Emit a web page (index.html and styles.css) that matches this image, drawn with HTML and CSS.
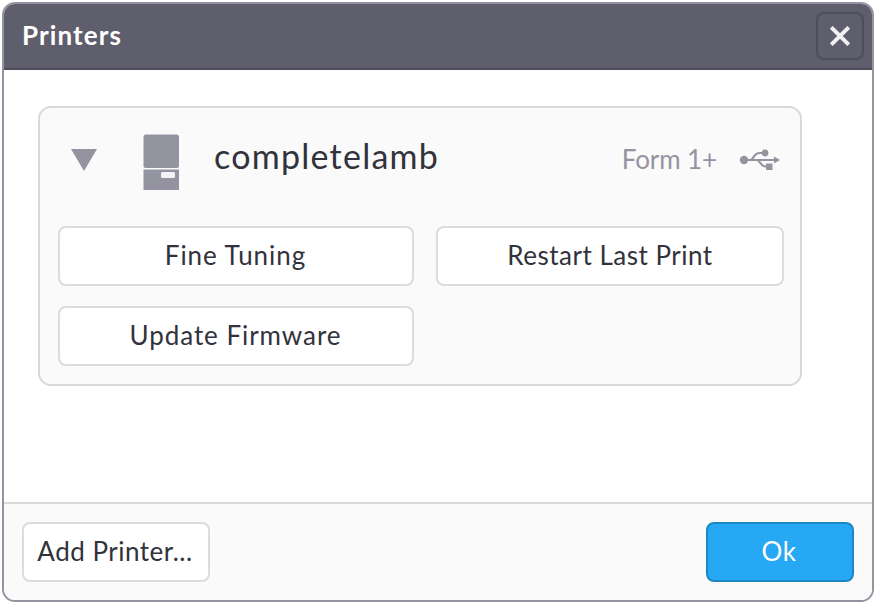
FILE: index.html
```html
<!DOCTYPE html>
<html lang="en">
<head>
  <meta charset="UTF-8" />
  <meta name="viewport" content="width=device-width, initial-scale=1.0"/>
  <title>Printers</title>
  <link rel="stylesheet" href="styles.css">
</head>
<body>

  <div class="dialog">
    <header class="dialog-header">
      <h1>Printers</h1>
      <button class="close-btn" aria-label="Close">
        <svg width="24" height="24" viewBox="0 0 24 24">
          <path d="M3.3 3.3L20.7 20.7M20.7 3.3L3.3 20.7" />
        </svg>
      </button>
    </header>

    <main class="dialog-body">
      <div class="printer-card">
        <div class="printer-row">
          <svg class="arrow" width="28" height="24" viewBox="0 0 28 24">
            <path d="M1 1H27L14 23Z" />
          </svg>
          <svg class="printer-icon" width="36" height="56" viewBox="0 0 36 56">
            <path d="M2.5 0.5H33.5Q36 0.5 36 3V32Q36 34 34 34H2.5Q0.5 34 0.5 32V3Q0.5 0.5 2.5 0.5Z" />
            <path d="M0.5 35.5H36V56H0.5Z" />
            <rect class="slot" x="18" y="38" width="14" height="6" rx="1.5" />
          </svg>
          <span class="printer-name">completelamb</span>
          <span class="printer-model">Form 1+</span>
          <svg class="usb-icon" width="42" height="24" viewBox="0 0 42 24">
            <path class="wire" d="M4 12H36M12 12C15.5 10 14.5 5 21 5H25M18 12C22 13 21 18.5 27 18.5H30" />
            <circle cx="5" cy="12" r="4.2" />
            <circle cx="26" cy="5" r="3.4" />
            <rect x="27" y="15.5" width="6.5" height="6.5" />
            <path d="M35 8.5L41 12L35 15.5Z" />
          </svg>
        </div>
        <div class="printer-actions">
          <button class="btn wide">Fine Tuning</button>
          <button class="btn">Restart Last Print</button>
          <button class="btn wide">Update Firmware</button>
        </div>
      </div>
    </main>

    <footer class="dialog-footer">
      <button class="btn add-btn">Add Printer...</button>
      <button class="btn ok-btn">Ok</button>
    </footer>
  </div>

</body>
</html>
```
FILE: styles.css
```css
* {
  box-sizing: border-box;
}

body {
  margin: 0;
  padding: 2px 1px 1px 2px;
  height: 603px;
  background-color: #fff;
  color: #32323c;
  font-family: Lato, sans-serif;
  overflow: hidden;
}

.dialog {
  display: flex;
  flex-direction: column;
  width: 872px;
  height: 600px;
  border: 2px solid #9494a1;
  border-radius: 13px;
  background-color: #fff;
  overflow: hidden;
}

.dialog-header {
  display: flex;
  justify-content: space-between;
  align-items: center;
  height: 66px;
  padding: 0 8px 0 18px;
  background-color: #5f5e6c;
  border-bottom: 2px solid #4e4d5a;
}

.dialog-header h1 {
  margin: 0;
  padding-bottom: 2px;
  color: #fff;
  font-size: 26px;
  font-weight: bold;
  letter-spacing: 1.1px;
}

.close-btn {
  display: flex;
  align-items: center;
  justify-content: center;
  width: 48px;
  height: 48px;
  padding: 0;
  background: none;
  border: 2px solid #4e4d5a;
  border-radius: 8px;
}

.close-btn path {
  stroke: #f0f0f0;
  stroke-width: 4;
}

.dialog-body {
  flex: 1;
  padding: 36px 34px;
}

.printer-card {
  width: 764px;
  height: 280px;
  padding: 18px 16px 18px 18px;
  background-color: #fafafa;
  border: 2px solid #d9d9d9;
  border-radius: 13px;
}

.printer-row {
  display: flex;
  align-items: center;
  height: 70px;
  margin-bottom: 30px;
  padding: 0 3px 0 12px;
}

.arrow,
.printer-icon,
.usb-icon {
  fill: #9494a1;
}

.arrow {
  margin-bottom: 2px;
}

.printer-icon {
  margin: 2px 0 0 45px;
}

.printer-icon .slot {
  fill: #f3f3f5;
}

.printer-name {
  flex: 1;
  margin-left: 35px;
  padding-bottom: 12px;
  font-size: 34px;
  letter-spacing: 1.25px;
}

.printer-model {
  padding-bottom: 4px;
  color: #9494a1;
  font-size: 26px;
  letter-spacing: -0.1px;
}

.usb-icon {
  margin: 0 0 2px 22px;
}

.usb-icon .wire {
  fill: none;
  stroke: #9494a1;
  stroke-width: 2.2;
}

.printer-actions {
  display: grid;
  grid-template-columns: 356px 348px;
  gap: 20px 22px;
}

.btn {
  height: 60px;
  padding: 0 0 2px;
  background-color: #fff;
  color: #32323c;
  border: 2px solid #dcdcdc;
  border-radius: 8px;
  font-family: inherit;
  font-size: 26px;
  letter-spacing: 0.5px;
}

.btn.wide {
  padding-right: 1px;
  letter-spacing: 0.95px;
}

.dialog-footer {
  display: flex;
  justify-content: space-between;
  align-items: center;
  height: 98px;
  padding: 0 18px;
  background-color: #fafafa;
  border-top: 2px solid #d9d9d9;
}

.add-btn {
  width: 188px;
  padding-right: 2px;
}

.ok-btn {
  width: 148px;
  padding-right: 2px;
  background-color: #27a8f4;
  border-color: #1d86c5;
  color: #fff;
}
```
